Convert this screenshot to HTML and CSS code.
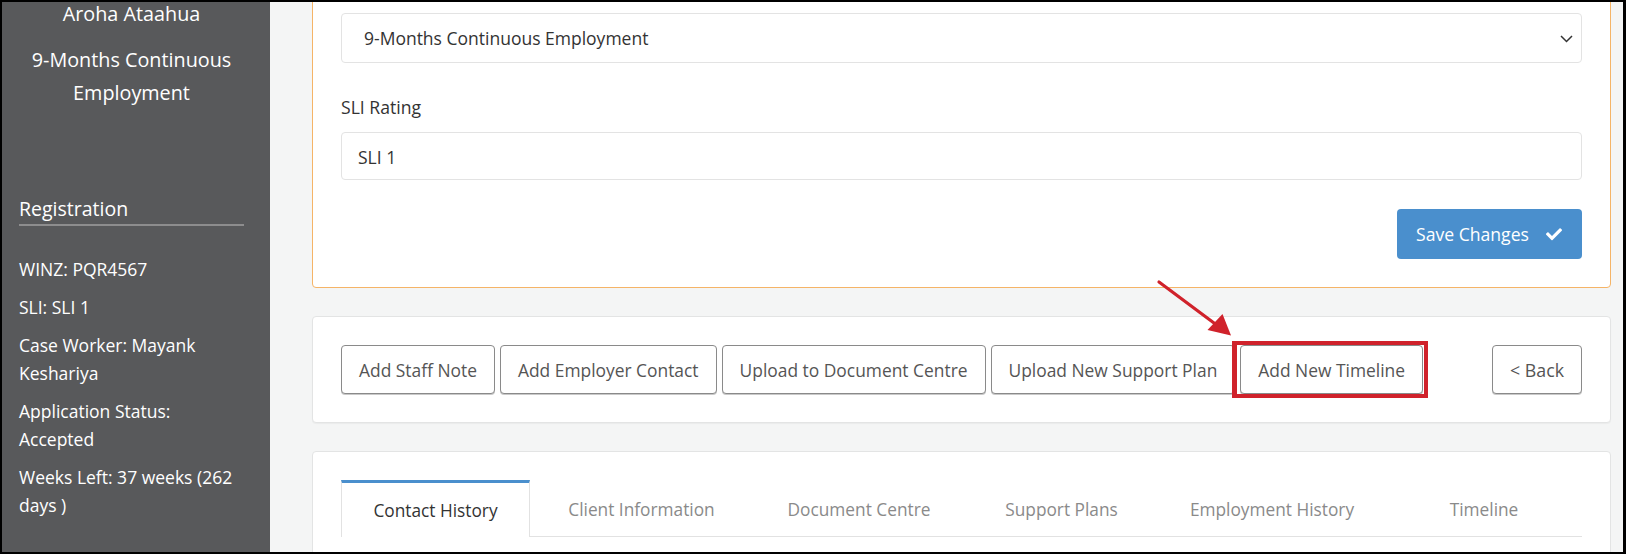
FILE: index.html
```html
<!DOCTYPE html>
<html lang="en">
<head>
<meta charset="utf-8">
<title>Client Record</title>
<link rel="stylesheet" href="styles.css">
</head>
<body>
<div class="frame">
  <aside class="sidebar">
    <div class="client">
      <div class="client-name">Aroha Ataahua</div>
      <div class="client-program">9-Months Continuous Employment</div>
    </div>
    <h3 class="side-heading">Registration</h3>
    <p class="side-item">WINZ: PQR4567</p>
    <p class="side-item">SLI: SLI 1</p>
    <p class="side-item">Case Worker: Mayank Keshariya</p>
    <p class="side-item">Application Status: Accepted</p>
    <p class="side-item">Weeks Left: 37 weeks (262 days )</p>
  </aside>

  <main class="main">
    <section class="card card-edit">
      <div class="select">
        <span class="select-value">9-Months Continuous Employment</span>
        <svg class="chevron" width="13" height="8" viewBox="0 0 13 8"><polyline points="1,1 6.5,6.5 12,1" fill="none" stroke="#333" stroke-width="1.5"/></svg>
      </div>
      <div class="field-label">SLI Rating</div>
      <div class="input">SLI 1</div>
      <div class="actions">
        <button class="btn-primary">Save Changes
          <svg class="check" width="16" height="14" viewBox="0 0 512 440"><path fill="#fff" d="M173.9 409.4l-166.4-166.4c-10-10-10-26.2 0-36.2l36.2-36.2c10-10 26.2-10 36.2 0L192 282.7 432.1 42.6c10-10 26.2-10 36.2 0l36.2 36.2c10 10 10 26.2 0 36.2l-294.4 294.4c-10 10-26.2 10-36.2 0z"/></svg>
        </button>
      </div>
    </section>

    <section class="card card-buttons">
      <div class="btn-row">
        <button class="btn">Add Staff Note</button>
        <button class="btn">Add Employer Contact</button>
        <button class="btn">Upload to Document Centre</button>
        <button class="btn">Upload New Support Plan</button>
        <span class="highlight"><button class="btn">Add New Timeline</button></span>
        <button class="btn btn-back">&lt; Back</button>
      </div>
    </section>

    <section class="card card-tabs">
      <nav class="tabs">
        <div class="tab active">Contact History</div>
        <div class="tab">Client Information</div>
        <div class="tab">Document Centre</div>
        <div class="tab">Support Plans</div>
        <div class="tab">Employment History</div>
        <div class="tab">Timeline</div>
      </nav>
    </section>
  </main>

  <svg class="annot-arrow" width="1626" height="554" viewBox="0 0 1626 554">
    <line x1="1159" y1="282" x2="1216" y2="324.5" stroke="#d0222b" stroke-width="3.2" stroke-linecap="round"/>
    <polygon points="1231,335.5 1207.5,330 1222.5,314" fill="#d0222b"/>
  </svg>
</div>
</body>
</html>
```

FILE: styles.css
```css
* { box-sizing: border-box; }

html, body {
  margin: 0;
  padding: 0;
}

body {
  font-family: "Open Sans", "Noto Sans", sans-serif;
  background: #000;
}

.frame {
  position: relative;
  width: 1626px;
  height: 554px;
  border: 2px solid #000;
  border-right-width: 3px;
  display: flex;
  overflow: hidden;
  background: #f4f5f5;
}

/* Sidebar */
.sidebar {
  width: 268px;
  flex: none;
  background: #58595b;
  color: #fff;
  padding: 0 26px 0 17px;
}

.client {
  margin-top: -5px;
  text-align: center;
  font-size: 19.8px;
  line-height: 33px;
}

.client-name {
  margin-bottom: 13px;
}

.side-heading {
  margin: 86px 0 29px;
  font-size: 19.5px;
  font-weight: 400;
  line-height: 28px;
  padding-bottom: 1px;
  border-bottom: 2px solid #8d8d8e;
}

.side-item {
  margin: 0 0 10px;
  font-size: 17.5px;
  line-height: 28px;
}

/* Main */
.main {
  flex: 1;
  padding: 0 12px 0 42px;
  min-width: 0;
}

.card {
  background: #fff;
  border: 1px solid #e3e4e4;
  border-radius: 4px;
  padding: 28px;
}

.card-edit {
  margin-top: -18px;
  border-color: #f5b467;
}

.card-buttons {
  margin-top: 28px;
  box-shadow: 0 1px 1px rgba(0,0,0,0.04);
}

.card-tabs {
  margin-top: 28px;
  padding-bottom: 40px;
}

.select {
  height: 50px;
  border: 1px solid #e3e3e3;
  border-radius: 4px;
  padding: 0 8px 0 22px;
  display: flex;
  align-items: center;
  justify-content: space-between;
  font-size: 17.5px;
  color: #333;
}

.chevron {
  margin-top: 1px;
}

.field-label {
  margin: 32px 0 13px;
  font-size: 17.6px;
  line-height: 24px;
  color: #333;
}

.input {
  height: 48px;
  border: 1px solid #e3e3e3;
  border-radius: 4px;
  padding: 0 16px;
  display: flex;
  align-items: center;
  font-size: 17.5px;
  color: #333;
  padding-top: 2px;
}

.actions {
  margin-top: 29px;
  display: flex;
  justify-content: flex-end;
}

.btn-primary {
  height: 50px;
  width: 185px;
  border: none;
  border-radius: 4px;
  background: #4a8fcd;
  color: #fff;
  font-family: inherit;
  font-size: 17.6px;
  padding: 0 20px 0 19px;
  display: flex;
  align-items: center;
  justify-content: space-between;
}

.btn-row {
  display: flex;
  align-items: center;
  gap: 5px;
}

.btn {
  height: 49px;
  padding: 0 17px;
  background: #fff;
  border: 1px solid #8a8a8a;
  border-radius: 4px;
  box-shadow: 0 1px 0 #c9c9c9;
  font-family: inherit;
  font-size: 17.4px;
  color: #555;
  white-space: nowrap;
}

.highlight {
  position: relative;
  display: inline-flex;
}

.highlight::after {
  content: "";
  position: absolute;
  left: -8px;
  right: -5px;
  top: -4px;
  bottom: -4px;
  border: 4px solid #d0222b;
  border-left-width: 5px;
  pointer-events: none;
}

.btn-back {
  margin-left: auto;
  width: 90px;
  padding: 0;
  font-size: 17.8px;
}

/* Tabs */
.tabs {
  display: grid;
  grid-template-columns: 189px 223px 212px 193px 228px 1fr;
  border-bottom: 1px solid #e2e2e2;
  height: 57px;
}

.tab {
  display: flex;
  align-items: center;
  justify-content: center;
  font-size: 17.3px;
  color: #8a8a8a;
  padding-top: 2px;
}

.tab.active {
  color: #333;
  background: #fff;
  border-top: 3px solid #4a8fcd;
  border-left: 1px solid #e2e2e2;
  border-right: 1px solid #e2e2e2;
  margin-bottom: -1px;
  padding-top: 0;
}

.annot-arrow {
  position: absolute;
  left: -2px;
  top: -2px;
  pointer-events: none;
}
```
